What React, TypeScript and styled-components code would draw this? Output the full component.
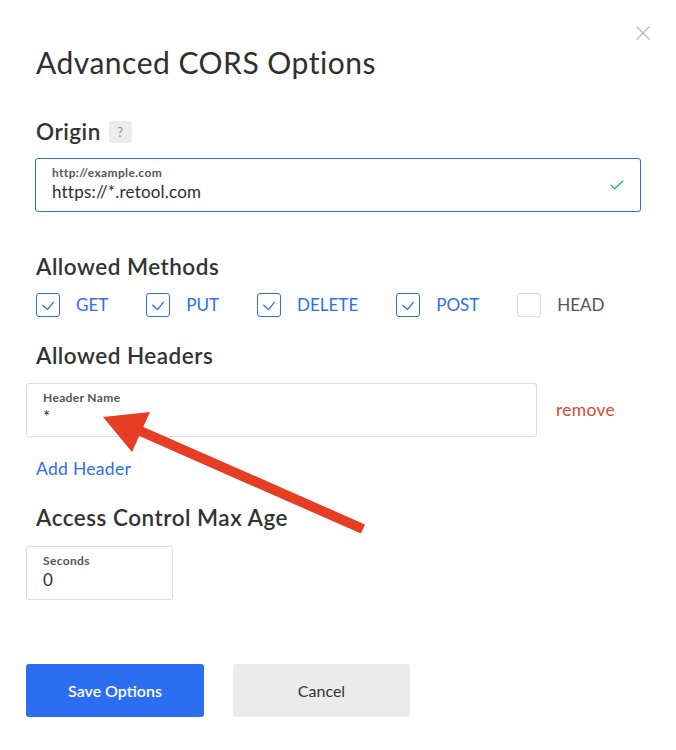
import React from "react";
import styled, { createGlobalStyle } from "styled-components";

const Global = createGlobalStyle`
  html, body { margin: 0; padding: 0; background: #fff; }
  body {
    font-family: Lato, "Noto Sans", sans-serif;
    color: #2e2e2e;
    -webkit-font-smoothing: antialiased;
  }
`;

const BLUE = "#2b6ef2";

const Dialog = styled.div`
  position: relative;
  width: 676px;
  height: 750px;
  box-sizing: border-box;
  padding: 44px 35px 0 26px;
  display: flex;
  flex-direction: column;
  align-items: flex-start;
  overflow: hidden;
`;

const CloseButton = styled.button`
  position: absolute;
  top: 26px;
  right: 26px;
  width: 14px;
  height: 14px;
  padding: 0;
  border: 0;
  background: none;
  display: flex;
  cursor: pointer;
`;

const Title = styled.h1`
  margin: 0 0 0 10px;
  font-size: 30px;
  line-height: 36px;
  font-weight: 400;
  color: #2f2f2f;
  letter-spacing: 0.5px;
`;

const HeadingRow = styled.div<{ $mt: number }>`
  display: flex;
  align-items: center;
  gap: 8px;
  margin: ${(p) => p.$mt}px 0 0 10px;
  height: 24px;
`;

const Heading = styled.h2`
  margin: 0;
  font-size: 22.5px;
  line-height: 24px;
  font-weight: 600;
  letter-spacing: 0.5px;
  color: #333;
`;

const HelpBadge = styled.span`
  width: 23px;
  height: 22px;
  border-radius: 3px;
  background: #ececec;
  color: #8f8f8f;
  font-size: 13px;
  display: flex;
  align-items: center;
  justify-content: center;
`;

const Field = styled.div<{ $w: number; $ml: number; $mt: number; $focused?: boolean }>`
  box-sizing: border-box;
  width: ${(p) => p.$w}px;
  height: 54px;
  margin: ${(p) => p.$mt}px 0 0 ${(p) => p.$ml}px;
  padding: 7px 16px 0;
  border: 1px solid ${(p) => (p.$focused ? BLUE : "#dcdcdc")};
  border-radius: 3px;
  display: flex;
  align-items: center;
  background: #fff;
`;

const FieldBody = styled.div`
  flex: 1;
  display: flex;
  flex-direction: column;
  align-self: flex-start;
`;

const FieldLabel = styled.div`
  font-size: 12px;
  line-height: 14px;
  font-weight: 700;
  letter-spacing: 0.35px;
  color: #555;
`;

const FieldValue = styled.div`
  margin-top: 2px;
  font-size: 17px;
  line-height: 20px;
  letter-spacing: 0.2px;
  color: #2e2e2e;
`;

const ValidIcon = styled.svg`
  width: 14px;
  height: 10px;
  margin-top: -7px;
  flex: none;
`;

const MethodRow = styled.div`
  display: flex;
  align-items: center;
  gap: 38px;
  margin: 14px 0 0 10px;
`;

const Method = styled.label<{ $on: boolean }>`
  display: flex;
  align-items: center;
  gap: 16px;
  font-size: 17px;
  line-height: 24px;
  color: ${(p) => (p.$on ? BLUE : "#555")};
  cursor: pointer;
`;

const Box = styled.span<{ $on: boolean }>`
  box-sizing: border-box;
  width: 24px;
  height: 24px;
  border: 1px solid ${(p) => (p.$on ? BLUE : "#d9d9d9")};
  border-radius: 3px;
  display: flex;
  background: #fff;
`;

const HeaderRow = styled.div`
  display: flex;
  align-items: center;
  gap: 19px;
  margin-top: 15px;
`;

const RemoveLink = styled.span`
  font-size: 17.5px;
  line-height: 20px;
  letter-spacing: 0.3px;
  color: #e2472c;
  margin-top: -1px;
`;

const AddLink = styled.span`
  margin: 22px 0 0 10px;
  font-size: 17.5px;
  line-height: 20px;
  letter-spacing: 0.3px;
  color: ${BLUE};
`;

const Buttons = styled.div`
  display: flex;
  gap: 29px;
  margin-top: 64px;
`;

const Button = styled.button<{ $primary?: boolean }>`
  width: ${(p) => (p.$primary ? 178 : 177)}px;
  height: 53px;
  border: 0;
  border-radius: 3px;
  font-family: Lato, "Noto Sans", sans-serif;
  font-size: 16px;
  font-weight: ${(p) => (p.$primary ? 600 : 400)};
  background: ${(p) => (p.$primary ? BLUE : "#ebebeb")};
  color: ${(p) => (p.$primary ? "#fff" : "#333")};
  cursor: pointer;
`;

const ArrowOverlay = styled.svg`
  position: absolute;
  left: 0;
  top: 0;
  width: 676px;
  height: 750px;
  pointer-events: none;
`;

const Check = () => (
  <svg width="22" height="22" viewBox="0 0 22 22">
    <path d="M5.7 11.3 L10.5 15.6 L16.3 8.3" fill="none" stroke={BLUE} strokeWidth="1.3" strokeLinecap="round" strokeLinejoin="round" />
  </svg>
);

const methods = [
  { name: "GET", on: true },
  { name: "PUT", on: true },
  { name: "DELETE", on: true },
  { name: "POST", on: true },
  { name: "HEAD", on: false },
];

export default function App() {
  return (
    <>
      <Global />
      <Dialog>
        <CloseButton aria-label="Close">
          <svg width="14" height="14" viewBox="0 0 14 14">
            <path d="M0.5 0.5 L13.5 13.5 M13.5 0.5 L0.5 13.5" stroke="#b8b8b8" strokeWidth="1.3" />
          </svg>
        </CloseButton>

        <Title>Advanced CORS Options</Title>

        <HeadingRow $mt={40}>
          <Heading>Origin</Heading>
          <HelpBadge>?</HelpBadge>
        </HeadingRow>
        <Field $w={606} $ml={9} $mt={14} $focused>
          <FieldBody>
            <FieldLabel>http://example.com</FieldLabel>
            <FieldValue>https://*.retool.com</FieldValue>
          </FieldBody>
          <ValidIcon viewBox="0 0 14 10">
            <path d="M0.8 5 L4.6 8.8 L13.2 0.8" fill="none" stroke="#2fbf5f" strokeWidth="1.5" />
          </ValidIcon>
        </Field>

        <HeadingRow $mt={43}>
          <Heading>Allowed Methods</Heading>
        </HeadingRow>
        <MethodRow>
          {methods.map((m) => (
            <Method key={m.name} $on={m.on}>
              <Box $on={m.on}>{m.on && <Check />}</Box>
              {m.name}
            </Method>
          ))}
        </MethodRow>

        <HeadingRow $mt={27}>
          <Heading>Allowed Headers</Heading>
        </HeadingRow>
        <HeaderRow>
          <Field $w={511} $ml={0} $mt={0}>
            <FieldBody>
              <FieldLabel>Header Name</FieldLabel>
              <FieldValue>*</FieldValue>
            </FieldBody>
          </Field>
          <RemoveLink>remove</RemoveLink>
        </HeaderRow>
        <AddLink>Add Header</AddLink>

        <HeadingRow $mt={27}>
          <Heading>Access Control Max Age</Heading>
        </HeadingRow>
        <Field $w={147} $ml={0} $mt={16}>
          <FieldBody>
            <FieldLabel>Seconds</FieldLabel>
            <FieldValue>0</FieldValue>
          </FieldBody>
        </Field>

        <Buttons>
          <Button $primary>Save Options</Button>
          <Button>Cancel</Button>
        </Buttons>

        <ArrowOverlay viewBox="0 0 676 750">
          <line x1="138" y1="430" x2="363" y2="529" stroke="#e63e25" strokeWidth="10" />
          <polygon points="103,417 150,412 132,452" fill="#e63e25" />
        </ArrowOverlay>
      </Dialog>
    </>
  );
}
